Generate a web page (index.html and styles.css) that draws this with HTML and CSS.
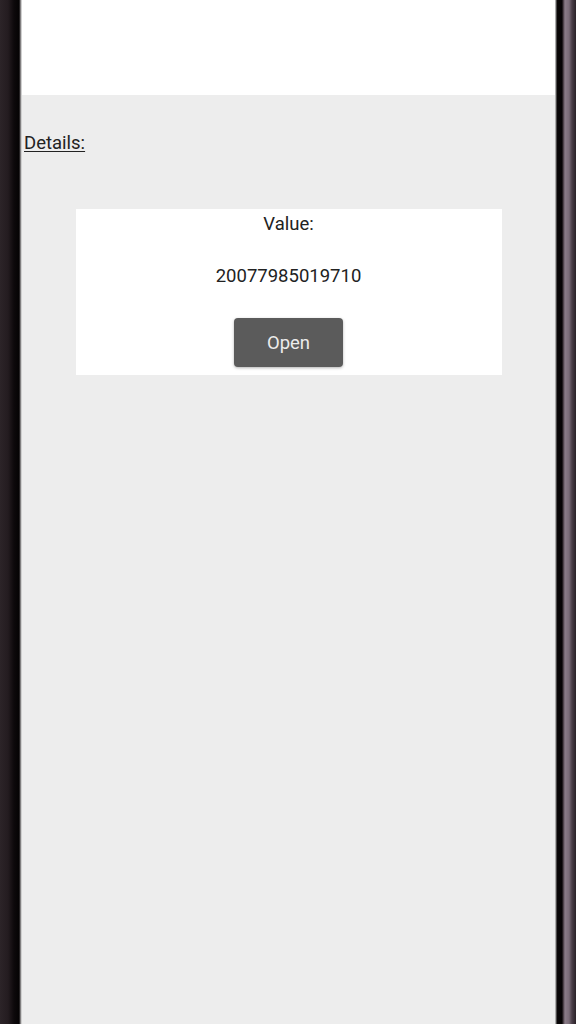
FILE: index.html
```html
<!DOCTYPE html>
<html>
<head>
<meta charset="utf-8">
<link rel="stylesheet" href="styles.css">
</head>
<body>
<div class="device">
  <div class="bezel-left"></div>
  <div class="screen">
    <div class="header"></div>
    <div class="content">
      <div class="label">Details:</div>
      <div class="card">
        <div class="card-title">Value:</div>
        <div class="card-value">20077985019710</div>
        <button class="btn">Open</button>
      </div>
    </div>
  </div>
  <div class="bezel-right"></div>
</div>
</body>
</html>
```

FILE: styles.css
```css
html, body {
  margin: 0;
  padding: 0;
  height: 100%;
}
body {
  font-family: Roboto, "Noto Sans", sans-serif;
  color: #222;
  background: #000;
}
.device {
  display: flex;
  height: 1024px;
  width: 576px;
}
.bezel-left {
  width: 22px;
  flex: none;
  background: linear-gradient(to right, #2c2428 0px, #241c20 8px, #0d090b 14px, #050304 19px, #4a4648 20px, #b8b8b8 21px, #e8e8e8 22px);
}
.bezel-right {
  width: 21px;
  flex: none;
  background: linear-gradient(to right, #d0d0d0 0px, #8a8a8a 1px, #0a0708 2px, #050304 7px, #3a3036 8px, #8a7c88 10px, #7a6c78 14px, #4a3e48 17px, #2a2228 21px);
}
.screen {
  flex: 1;
  display: flex;
  flex-direction: column;
  background: #ededed;
}
.header {
  height: 95px;
  background: #ffffff;
  flex: none;
}
.content {
  padding: 38px 2px 0 2px;
  display: flex;
  flex-direction: column;
}
.label {
  font-size: 18.5px;
  line-height: 21px;
  text-decoration: underline;
  text-underline-offset: 2px;
  text-decoration-thickness: 1px;
  color: #222;
}
.card {
  align-self: center;
  margin-top: 55px;
  width: 426px;
  background: #fff;
  display: flex;
  flex-direction: column;
  align-items: center;
  padding: 5px 0 8px;
  box-sizing: border-box;
}
.card-title, .card-value {
  font-size: 18.5px;
  line-height: 21px;
  color: #222;
}
.card-value {
  margin-top: 31px;
}
.btn {
  margin-top: 31px;
  width: 109px;
  height: 49px;
  border: none;
  border-radius: 4px;
  background: #5b5b5b;
  color: #ececec;
  font-family: Roboto, "Noto Sans", sans-serif;
  font-size: 18.5px;
  box-shadow: 0 1px 3px rgba(0,0,0,0.3);
  padding: 0;
}
```
